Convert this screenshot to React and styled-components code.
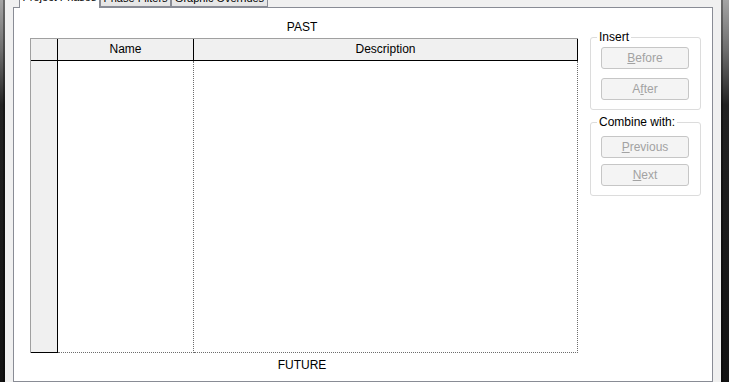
import React from 'react';
import styled, { createGlobalStyle } from 'styled-components';

const GlobalStyle = createGlobalStyle`
  html, body {
    margin: 0;
    padding: 0;
    background: #f0f0f0;
    overflow: hidden;
  }
  body {
    font-family: "Liberation Sans", Arial, sans-serif;
    font-size: 12px;
    color: #000;
  }
`;

// Window chrome
const Window = styled.div`
  display: flex;
  align-items: stretch;
  width: 729px;
  height: 382px;
  overflow: hidden;
`;

const frameFill = 'linear-gradient(to bottom, #a4a4a4 0px, #6e6e6e 50px, #222222 105px, #121212 382px)';

const LeftFrame = styled.div`
  flex: 0 0 5px;
  width: 5px;
  height: 382px;
  background-color: #151515;
  background-image: ${frameFill};
  box-shadow: inset -2px 0 0 rgba(0, 0, 0, 0.35);
`;

const RightFrame = styled.div`
  flex: 0 0 8px;
  width: 8px;
  height: 382px;
  background-color: #151515;
  background-image: ${frameFill};
  box-shadow: inset 2px 0 0 rgba(0, 0, 0, 0.35);
`;

const Dialog = styled.div`
  flex: 1;
  min-width: 0;
  display: flex;
  flex-direction: column;
  padding: 0 8px;
  background: #f0f0f0;
`;

// Tabs (cut off at the top of the shot)
const TabStrip = styled.div`
  display: flex;
  align-items: flex-end;
  height: 7px;
  padding-left: 6px;
  position: relative;
  z-index: 1;
`;

const Tab = styled.div`
  flex: none;
  width: ${p => p.$w}px;
  height: ${p => (p.$active ? 20 : 18)}px;
  margin-bottom: ${p => (p.$active ? -1 : 0)}px;
  box-sizing: border-box;
  border: 1px solid #898c95;
  border-bottom: ${p => (p.$active ? 'none' : '1px solid #898c95')};
  background: ${p => (p.$active ? '#fff' : 'linear-gradient(#f2f2f2, #e4e4e4)')};
  font-size: 11px;
  text-align: center;
  line-height: 16px;
  white-space: nowrap;
  overflow: hidden;
`;

const Panel = styled.div`
  flex: 1;
  display: flex;
  gap: 12px;
  padding: 12px 10px 0 16px;
  background: #fff;
  border: 1px solid #898c95;
`;

// Phases grid
const GridArea = styled.div`
  flex: none;
  width: 548px;
  display: flex;
  flex-direction: column;
`;

const Caption = styled.div`
  text-align: center;
  line-height: 14px;
  margin: ${p => p.$m};
  padding-right: 4px;
`;

const Table = styled.div`
  height: 315px;
  box-sizing: border-box;
  display: flex;
  flex-direction: column;
  border-left: 1px solid #a0a0a0;
  border-top: 1px solid #a0a0a0;
`;

const Row = styled.div`
  display: flex;
  flex: ${p => (p.$grow ? 1 : 'none')};
  height: ${p => (p.$grow ? 'auto' : '22px')};
`;

const HeadCell = styled.div`
  flex: none;
  width: ${p => p.$w}px;
  box-sizing: border-box;
  background: #f0f0f0;
  border-right: 1px solid #000;
  border-bottom: 1px solid #000;
  text-align: center;
  line-height: 20px;
`;

const RowHeader = styled.div`
  flex: none;
  width: 27px;
  box-sizing: border-box;
  background: #f0f0f0;
  border-right: 1px solid #000;
  border-bottom: 1px solid #000;
`;

const BodyCell = styled.div`
  flex: none;
  width: ${p => p.$w}px;
  box-sizing: border-box;
  background: #fff;
  border-right: 1px dotted #6d6d6d;
  border-bottom: 1px dotted #6d6d6d;
`;

// Side command groups
const Side = styled.div`
  flex: none;
  width: 111px;
  display: flex;
  flex-direction: column;
  gap: 5px;
  margin-top: 10px;
`;

const Group = styled.fieldset`
  margin: 0;
  min-width: 0;
  box-sizing: border-box;
  width: 111px;
  border: 1px solid #dcdcdc;
  border-radius: 3px;
  padding: ${p => p.$pt}px 10px 9px;
  display: flex;
  flex-direction: column;
  gap: ${p => p.$gap}px;
`;

const Legend = styled.legend`
  margin-left: -4px;
  padding: 0 2px;
  font-size: 12px;
  line-height: 14px;
`;

const Button = styled.button`
  width: 88px;
  height: 22px;
  box-sizing: border-box;
  padding: 0;
  border: 1px solid #c6c6c6;
  border-radius: 3px;
  background: #f4f4f4;
  color: #a2a2a2;
  font-family: "Liberation Sans", Arial, sans-serif;
  font-size: 12px;
  display: flex;
  align-items: center;
  justify-content: center;
`;

const tabs = [
  { label: 'Project Phases', w: 81, active: true },
  { label: 'Phase Filters', w: 71 },
  { label: 'Graphic Overrides', w: 97 },
];

export default function App() {
  return (
    <>
      <GlobalStyle />
      <Window>
        <LeftFrame />
        <Dialog>
          <TabStrip>
            {tabs.map(t => (
              <Tab key={t.label} $w={t.w} $active={t.active}>
                {t.label}
              </Tab>
            ))}
          </TabStrip>
          <Panel>
            <GridArea>
              <Caption $m="0 0 4px">PAST</Caption>
              <Table>
                <Row>
                  <HeadCell $w={27} />
                  <HeadCell $w={136}>Name</HeadCell>
                  <HeadCell $w={384}>Description</HeadCell>
                </Row>
                <Row $grow>
                  <RowHeader />
                  <BodyCell $w={136} />
                  <BodyCell $w={384} />
                </Row>
              </Table>
              <Caption $m="5px 0 0">FUTURE</Caption>
            </GridArea>
            <Side>
              <Group $pt={3} $gap={9}>
                <Legend>Insert</Legend>
                <Button disabled><u>B</u>efore</Button>
                <Button disabled>A<u>f</u>ter</Button>
              </Group>
              <Group $pt={7} $gap={6}>
                <Legend>Combine with:</Legend>
                <Button disabled><u>P</u>revious</Button>
                <Button disabled><u>N</u>ext</Button>
              </Group>
            </Side>
          </Panel>
        </Dialog>
        <RightFrame />
      </Window>
    </>
  );
}
